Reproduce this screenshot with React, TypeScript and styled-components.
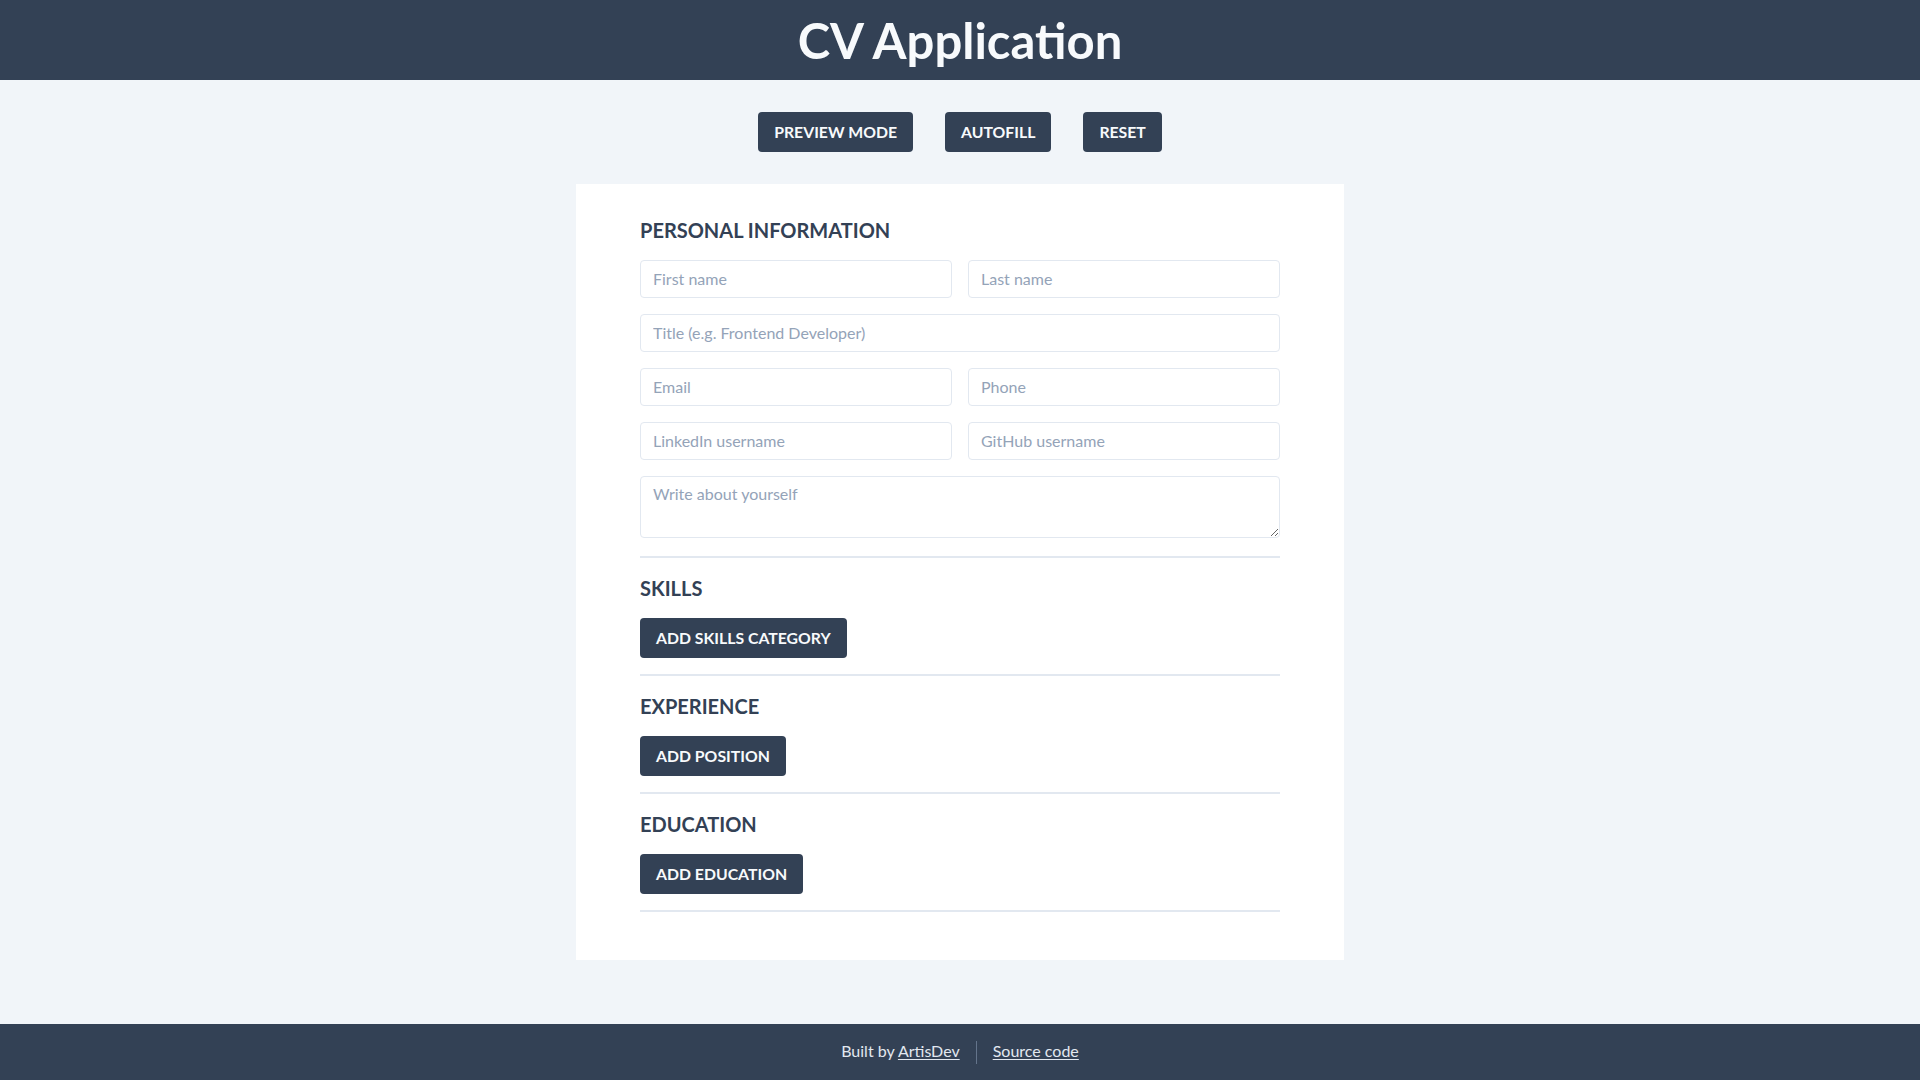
import styled, { createGlobalStyle } from 'styled-components';

const GlobalStyle = createGlobalStyle`
  * {
    box-sizing: border-box;
  }
  body {
    margin: 0;
    font-family: Lato, 'Open Sans', sans-serif;
    background: #f1f5f9;
    color: #334155;
  }
`;

const Page = styled.div`
  display: flex;
  flex-direction: column;
  min-height: 100vh;
`;

const Header = styled.header`
  height: 80px;
  display: flex;
  align-items: center;
  justify-content: center;
  background: #334155;
`;

const Title = styled.h1`
  margin: 0;
  font-size: 49px;
  font-weight: 700;
  line-height: 1;
  color: #f8fafc;
`;

const Main = styled.main`
  display: flex;
  flex-direction: column;
  align-items: center;
  gap: 32px;
  padding: 32px 0 64px;
`;

const Toolbar = styled.div`
  display: flex;
  gap: 32px;
`;

const Button = styled.button`
  height: 40px;
  padding: 0 16px 2px;
  border: none;
  border-radius: 4px;
  background: #334155;
  color: #f8fafc;
  font-family: Lato, sans-serif;
  font-size: 15.8px;
  font-weight: 700;
  text-transform: uppercase;
  cursor: pointer;
  align-self: flex-start;
`;

const Card = styled.div`
  width: 768px;
  background: #ffffff;
  padding: 33px 64px 48px;
`;

const Section = styled.section<{ $first?: boolean }>`
  display: flex;
  flex-direction: column;
  padding: ${(p) => (p.$first ? '0 0 18px' : '17px 0 16px')};
  border-bottom: 2px solid #e2e8f0;
`;

const Heading = styled.h2`
  margin: 0 0 17px;
  font-size: 20px;
  font-weight: 700;
  line-height: 26px;
  text-transform: uppercase;
  color: #334155;
`;

const Fields = styled.div`
  display: grid;
  grid-template-columns: 1fr 1fr;
  gap: 16px;
`;

const Input = styled.input<{ $wide?: boolean }>`
  grid-column: ${(p) => (p.$wide ? '1 / -1' : 'auto')};
  height: 38px;
  padding: 0 12px 2px;
  border: 1px solid #e2e8f0;
  border-radius: 4px;
  font-family: Lato, sans-serif;
  font-size: 16px;
  color: #334155;
  outline: none;
  &::placeholder {
    color: #94a3b8;
  }
`;

const TextArea = styled.textarea`
  grid-column: 1 / -1;
  height: 62px;
  padding: 5px 12px;
  border: 1px solid #e2e8f0;
  border-radius: 4px;
  font-family: Lato, sans-serif;
  font-size: 16px;
  line-height: 24px;
  color: #334155;
  outline: none;
  &::placeholder {
    color: #94a3b8;
  }
`;

const Footer = styled.footer`
  margin-top: auto;
  height: 56px;
  padding-bottom: 3px;
  display: flex;
  align-items: center;
  justify-content: center;
  gap: 16px;
  background: #334155;
  color: #e2e8f0;
  font-size: 16px;
`;

const FooterLink = styled.a`
  color: inherit;
  text-decoration: underline;
  text-underline-offset: 2px;
`;

const Separator = styled.span`
  width: 1px;
  height: 23px;
  margin-top: 3px;
  background: #64748b;
`;

const sections = [
  { title: 'Skills', action: 'Add skills category' },
  { title: 'Experience', action: 'Add position' },
  { title: 'Education', action: 'Add education' },
];

const App = () => (
  <Page>
    <GlobalStyle />
    <Header>
      <Title>CV Application</Title>
    </Header>
    <Main>
      <Toolbar>
        <Button>Preview mode</Button>
        <Button>Autofill</Button>
        <Button>Reset</Button>
      </Toolbar>
      <Card>
        <Section $first>
          <Heading>Personal information</Heading>
          <Fields>
            <Input placeholder='First name' />
            <Input placeholder='Last name' />
            <Input $wide placeholder='Title (e.g. Frontend Developer)' />
            <Input placeholder='Email' />
            <Input placeholder='Phone' />
            <Input placeholder='LinkedIn username' />
            <Input placeholder='GitHub username' />
            <TextArea placeholder='Write about yourself' />
          </Fields>
        </Section>
        {sections.map((s) => (
          <Section key={s.title}>
            <Heading>{s.title}</Heading>
            <Button>{s.action}</Button>
          </Section>
        ))}
      </Card>
    </Main>
    <Footer>
      <span>
        Built by <FooterLink href='#'>ArtisDev</FooterLink>
      </span>
      <Separator />
      <FooterLink href='#'>Source code</FooterLink>
    </Footer>
  </Page>
);

export default App;
